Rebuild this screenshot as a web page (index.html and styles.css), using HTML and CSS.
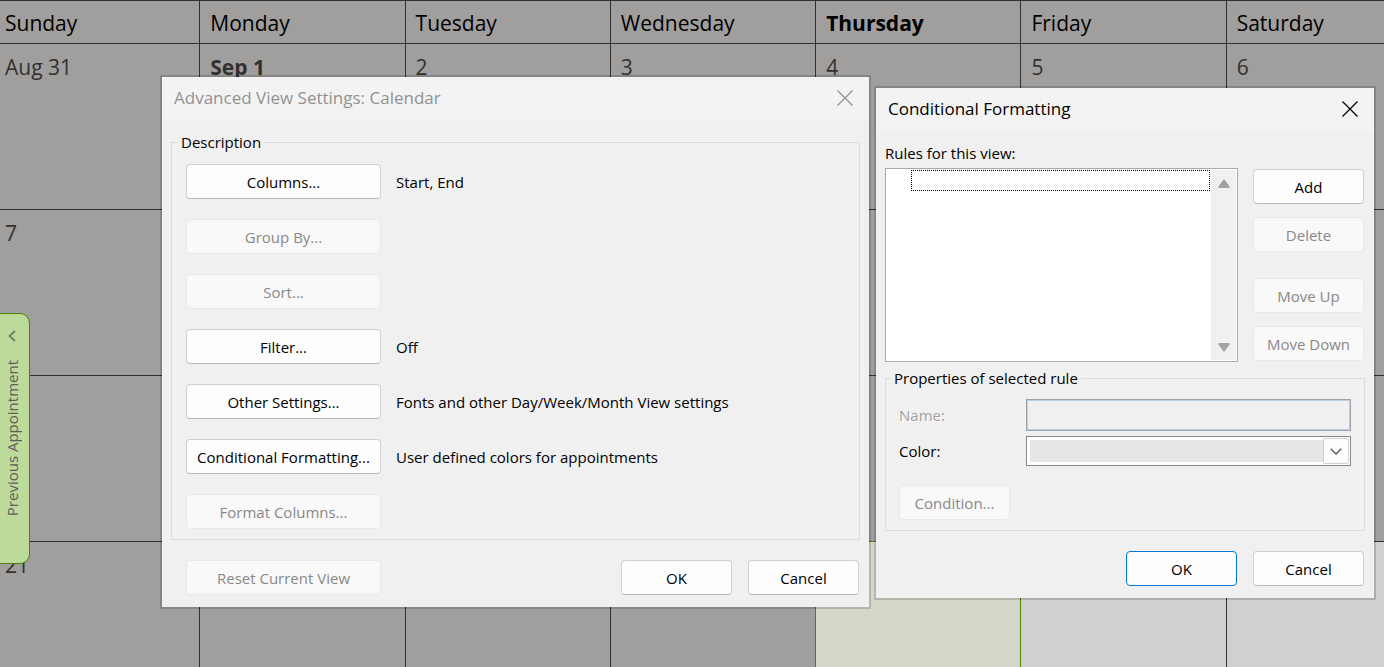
FILE: index.html
```
<!DOCTYPE html>
<html lang="en">
<head>
    <meta charset="UTF-8" />
    <meta name="viewport" content="width=device-width, initial-scale=1.0"/>
    <title>Calendar</title>
    <link rel="stylesheet" href="styles.css">
</head>
<body>
<table class="calendar">
    <thead>
        <tr>
            <th>Sunday</th>
            <th>Monday</th>
            <th>Tuesday</th>
            <th>Wednesday</th>
            <th class="current">Thursday</th>
            <th>Friday</th>
            <th>Saturday</th>
        </tr>
    </thead>
    <tbody>
        <tr>
            <td>Aug 31</td>
            <td class="month-start">Sep 1</td>
            <td>2</td>
            <td>3</td>
            <td>4</td>
            <td>5</td>
            <td>6</td>
        </tr>
        <tr>
            <td>7</td>
            <td></td>
            <td></td>
            <td></td>
            <td></td>
            <td></td>
            <td></td>
        </tr>
        <tr>
            <td></td>
            <td></td>
            <td></td>
            <td></td>
            <td class="above-today"></td>
            <td></td>
            <td></td>
        </tr>
        <tr>
            <td>21</td>
            <td></td>
            <td></td>
            <td></td>
            <td class="today"></td>
            <td class="work after-today"></td>
            <td class="work"></td>
        </tr>
    </tbody>
</table>

<button type="button" class="prev-tab">
    <svg width="8" height="12" viewBox="0 0 8 12"><path d="M7 1 L1.5 6 L7 11" fill="none" stroke="#6f7f62" stroke-width="1.8"/></svg>
    <span>Previous Appointment</span>
</button>

<section class="dialog view-settings" role="dialog" aria-labelledby="settingsTitle">
    <header class="title-bar inactive">
        <h2 id="settingsTitle">Advanced View Settings: Calendar</h2>
        <button type="button" class="close" aria-label="Close">
            <svg width="16" height="16" viewBox="0 0 16 16"><path d="M0.5 0.5 L15.5 15.5 M15.5 0.5 L0.5 15.5" fill="none" stroke="currentColor" stroke-width="1.3"/></svg>
        </button>
    </header>
    <div class="dialog-body">
        <fieldset class="description">
            <legend>Description</legend>
            <div class="setting"><button type="button" class="btn">Columns...</button><span>Start, End</span></div>
            <div class="setting"><button type="button" class="btn" disabled>Group By...</button></div>
            <div class="setting"><button type="button" class="btn" disabled>Sort...</button></div>
            <div class="setting"><button type="button" class="btn">Filter...</button><span>Off</span></div>
            <div class="setting"><button type="button" class="btn">Other Settings...</button><span>Fonts and other Day/Week/Month View settings</span></div>
            <div class="setting"><button type="button" class="btn">Conditional Formatting...</button><span>User defined colors for appointments</span></div>
            <div class="setting"><button type="button" class="btn" disabled>Format Columns...</button></div>
        </fieldset>
        <footer class="actions">
            <button type="button" class="btn reset" disabled>Reset Current View</button>
            <button type="button" class="btn">OK</button>
            <button type="button" class="btn">Cancel</button>
        </footer>
    </div>
</section>

<section class="dialog formatting" role="dialog" aria-labelledby="formattingTitle">
    <header class="title-bar">
        <h2 id="formattingTitle">Conditional Formatting</h2>
        <button type="button" class="close" aria-label="Close">
            <svg width="16" height="16" viewBox="0 0 16 16"><path d="M0.5 0.5 L15.5 15.5 M15.5 0.5 L0.5 15.5" fill="none" stroke="currentColor" stroke-width="1.3"/></svg>
        </button>
    </header>
    <div class="dialog-body">
        <div class="rules-label" id="rulesLabel">Rules for this view:</div>
        <div class="rules">
            <div class="list">
                <ul role="listbox" tabindex="0" aria-labelledby="rulesLabel">
                    <li role="option" aria-label="Empty rule"></li>
                </ul>
                <div class="scrollbar">
                    <button type="button" aria-label="Scroll up">
                        <svg width="12" height="10" viewBox="0 0 12 10"><path d="M5 1.2 Q6 0 7 1.2 L11.6 7.6 Q12 9 10.8 9 H1.2 Q0 9 0.4 7.6 Z" fill="#a3a3a3"/></svg>
                    </button>
                    <button type="button" aria-label="Scroll down">
                        <svg width="12" height="10" viewBox="0 0 12 10"><path d="M5 8.8 Q6 10 7 8.8 L11.6 2.4 Q12 1 10.8 1 H1.2 Q0 1 0.4 2.4 Z" fill="#a3a3a3"/></svg>
                    </button>
                </div>
            </div>
            <div class="rule-buttons">
                <button type="button" class="btn">Add</button>
                <button type="button" class="btn" disabled>Delete</button>
                <button type="button" class="btn move-up" disabled>Move Up</button>
                <button type="button" class="btn" disabled>Move Down</button>
            </div>
        </div>
        <fieldset class="properties">
            <legend>Properties of selected rule</legend>
            <div class="field">
                <label for="ruleName" class="disabled">Name:</label>
                <input type="text" id="ruleName" disabled />
            </div>
            <div class="field">
                <label for="ruleColor">Color:</label>
                <div class="select">
                    <select id="ruleColor"></select>
                    <span class="arrow">
                        <svg width="12" height="7" viewBox="0 0 12 7"><path d="M0.8 0.8 L6 6 L11.2 0.8" fill="none" stroke="#555" stroke-width="1.3"/></svg>
                    </span>
                </div>
            </div>
            <button type="button" class="btn condition" disabled>Condition...</button>
        </fieldset>
        <footer class="actions">
            <button type="button" class="btn default">OK</button>
            <button type="button" class="btn">Cancel</button>
        </footer>
    </div>
</section>
</body>
</html>
```
FILE: styles.css
```
* {
    box-sizing: border-box;
}

body {
    margin: 0;
    height: 100vh;
    overflow: hidden;
    position: relative;
    background-color: #a19f9d;
    color: #000;
    font-family: 'Segoe UI', 'Open Sans', sans-serif;
    font-size: 15px;
    line-height: 20px;
}

button, input, select {
    font: inherit;
}

/* calendar */

.calendar {
    width: calc(100% + 53px);
    height: 100vh;
    margin-left: -6px;
    table-layout: fixed;
    border-collapse: separate;
    border-spacing: 0;
    border-top: 1px solid #323130;
    font-size: 21px;
    line-height: 28px;
}

.calendar th, .calendar td {
    padding: 9px 10px 0;
    border-left: 1px solid #323130;
    border-bottom: 1px solid #323130;
    text-align: left;
    vertical-align: top;
}

.calendar th {
    height: 43px;
    padding-top: 8px;
    font-weight: normal;
}

.calendar td {
    height: 166px;
    color: #323130;
}

/* the last visible week takes what is left of the window */
.calendar tbody tr:last-child td {
    height: auto;
    border-bottom: none;
}

.calendar .current, .calendar .month-start {
    font-weight: bold;
}

.calendar .work {
    background-color: #d2d0ce;
}

.calendar .today {
    background-color: #d4d8cb;
    border-left-color: #498205;
}

.calendar .after-today {
    border-left-color: #498205;
}

.calendar .above-today {
    border-bottom-color: #498205;
}

.prev-tab {
    position: absolute;
    left: -1px;
    top: 313px;
    width: 31px;
    height: 251px;
    padding: 16px 5px 0 0;
    display: flex;
    flex-direction: column;
    align-items: center;
    gap: 18px;
    background-color: #bdda9b;
    border: 1px solid #498205;
    border-radius: 0 10px 10px 0;
    color: #605e5c;
    font-size: 15px;
}

.prev-tab span {
    writing-mode: vertical-rl;
    transform: rotate(180deg);
    white-space: nowrap;
}

/* dialogs */

.dialog {
    position: absolute;
    background-color: #f0f0f0;
    box-shadow: 0 0 0 2px rgba(0, 0, 0, 0.16);
}

.view-settings {
    left: 162px;
    top: 77px;
    width: 707px;
}

.formatting {
    left: 876px;
    top: 88px;
    width: 498px;
}

.title-bar {
    display: flex;
    align-items: center;
    justify-content: space-between;
    height: 43px;
    padding: 0 16px 2px 12px;
    background-color: #f3f3f3;
}

.title-bar h2 {
    margin: 0;
    font-size: 17px;
    font-weight: normal;
}

.inactive {
    color: #929292;
}

.close {
    display: flex;
    padding: 0;
    border: none;
    background: none;
    color: inherit;
}

.dialog-body {
    padding: 12px 9px;
}

fieldset {
    min-width: 0;
    margin: 0;
    border: 1px solid #dcdcdc;
}

legend {
    margin-left: -8px;
    padding: 0 3px;
}

.btn {
    width: 111px;
    height: 35px;
    padding: 0;
    background-color: #fdfdfd;
    border: 1px solid #d0d0d0;
    border-bottom-color: #bababa;
    border-radius: 4px;
    color: #000;
    white-space: nowrap;
}

.btn:disabled {
    background-color: #f9f9f9;
    border-color: #e8e8e8;
    color: #888;
}

.btn.default {
    border-color: #0078d4;
}

.description {
    display: flex;
    flex-direction: column;
    gap: 20px;
    padding: 12px 14px 10px;
}

.setting {
    display: flex;
    align-items: center;
    gap: 15px;
}

.setting .btn, .btn.reset {
    width: 195px;
}

.actions {
    display: flex;
    justify-content: flex-end;
    gap: 16px;
    margin-top: 20px;
    padding: 0 1px 0 15px;
}

.reset {
    margin-right: auto;
}

/* rules list */

.rules {
    display: flex;
    gap: 15px;
    margin-top: 5px;
}

.list {
    flex: 1;
    display: flex;
    padding: 1px;
    background-color: #fff;
    border: 1px solid #ababab;
}

.list ul {
    flex: 1;
    margin: 0;
    padding: 0 1px 0 24px;
    list-style: none;
    outline: none;
}

.list li {
    height: 21px;
    border: 1px dotted #000;
}

.scrollbar {
    display: flex;
    flex-direction: column;
    justify-content: space-between;
    width: 25px;
    padding: 9px 0 8px;
    background-color: #f0f0f0;
}

.scrollbar button {
    display: flex;
    justify-content: center;
    padding: 0;
    border: none;
    background: none;
}

.rule-buttons {
    display: flex;
    flex-direction: column;
    gap: 13px;
    padding: 1px 1px 1px 0;
}

.move-up {
    margin-top: 13px;
}

.properties {
    margin-top: 6px;
    padding: 11px 13px 10px;
}

.field {
    display: grid;
    grid-template-columns: 127px 1fr;
    align-items: center;
    margin-bottom: 5px;
}

label.disabled {
    color: #a0a0a0;
    text-shadow: 1px 1px 0 #fff;
}

.field input {
    width: 100%;
    height: 32px;
    padding: 0 6px;
    background-color: #f0f0f0;
    border: 1px solid #a0a3ab;
    box-shadow: inset 0 0 0 1px #b5cfe7;
}

.select {
    position: relative;
}

.select select {
    display: block;
    width: 100%;
    height: 30px;
    padding: 3px;
    appearance: none;
    background: #e5e5e5 content-box;
    border: 1px solid #858790;
    border-radius: 0;
    box-shadow: inset 0 0 0 3px #fff;
}

.arrow {
    position: absolute;
    top: 2px;
    right: 2px;
    bottom: 2px;
    width: 26px;
    display: flex;
    align-items: center;
    justify-content: center;
    background-color: #fdfdfd;
    border: 1px solid #d0d0d0;
    border-radius: 2px;
    pointer-events: none;
}

.condition {
    margin-top: 14px;
}
```
